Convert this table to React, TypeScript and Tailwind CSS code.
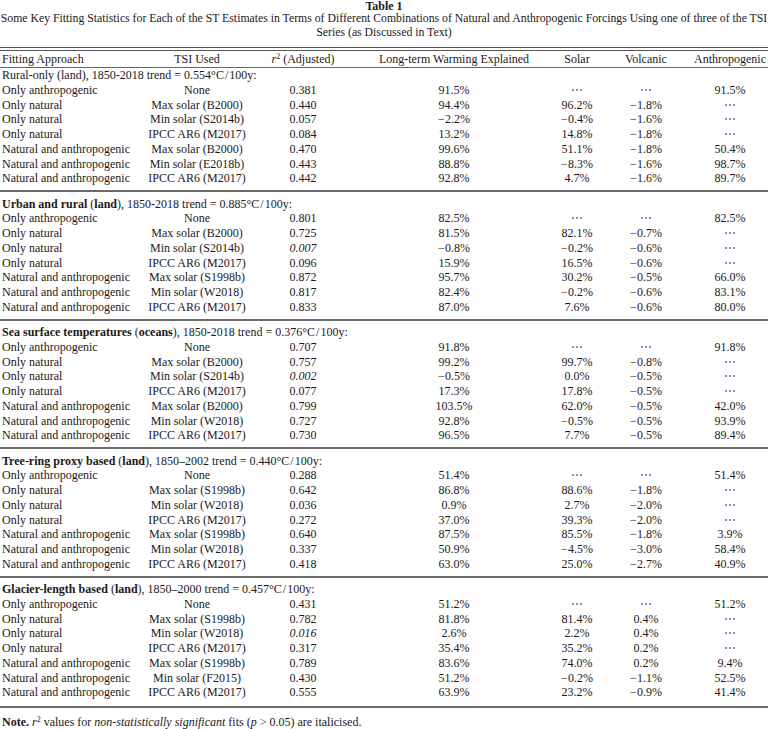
import React from 'react';

type Row = [string, string, string, string, string, string, string, boolean?];

interface Section {
  title: React.ReactNode;
  rows: Row[];
}

const M = '\u2212';
const E = '\u22EF';
const NA = 'Natural and anthropogenic';
const ON = 'Only natural';
const OA = 'Only anthropogenic';

const cols = 'grid grid-cols-[142px_110px_102px_200px_46px_92px_76px]';
const line = 'h-[14.75px] leading-[14.75px]';

const trend = (v: string) => (
  <>
    trend = {v}°C{'\u200A'}/{'\u200A'}100y:
  </>
);

const sections: Section[] = [
  {
    title: <>Rural-only (land), 1850-2018 {trend('0.554')}</>,
    rows: [
      [OA, 'None', '0.381', '91.5%', E, E, '91.5%'],
      [ON, 'Max solar (B2000)', '0.440', '94.4%', '96.2%', `${M}1.8%`, E],
      [ON, 'Min solar (S2014b)', '0.057', `${M}2.2%`, `${M}0.4%`, `${M}1.6%`, E],
      [ON, 'IPCC AR6 (M2017)', '0.084', '13.2%', '14.8%', `${M}1.8%`, E],
      [NA, 'Max solar (B2000)', '0.470', '99.6%', '51.1%', `${M}1.8%`, '50.4%'],
      [NA, 'Min solar (E2018b)', '0.443', '88.8%', `${M}8.3%`, `${M}1.6%`, '98.7%'],
      [NA, 'IPCC AR6 (M2017)', '0.442', '92.8%', '4.7%', `${M}1.6%`, '89.7%'],
    ],
  },
  {
    title: (
      <>
        <b>Urban and rural</b> (<b>land</b>), 1850-2018 {trend('0.885')}
      </>
    ),
    rows: [
      [OA, 'None', '0.801', '82.5%', E, E, '82.5%'],
      [ON, 'Max solar (B2000)', '0.725', '81.5%', '82.1%', `${M}0.7%`, E],
      [ON, 'Min solar (S2014b)', '0.007', `${M}0.8%`, `${M}0.2%`, `${M}0.6%`, E, true],
      [ON, 'IPCC AR6 (M2017)', '0.096', '15.9%', '16.5%', `${M}0.6%`, E],
      [NA, 'Max solar (S1998b)', '0.872', '95.7%', '30.2%', `${M}0.5%`, '66.0%'],
      [NA, 'Min solar (W2018)', '0.817', '82.4%', `${M}0.2%`, `${M}0.6%`, '83.1%'],
      [NA, 'IPCC AR6 (M2017)', '0.833', '87.0%', '7.6%', `${M}0.6%`, '80.0%'],
    ],
  },
  {
    title: (
      <>
        <b>Sea surface temperatures</b> (<b>oceans</b>), 1850-2018 {trend('0.376')}
      </>
    ),
    rows: [
      [OA, 'None', '0.707', '91.8%', E, E, '91.8%'],
      [ON, 'Max solar (B2000)', '0.757', '99.2%', '99.7%', `${M}0.8%`, E],
      [ON, 'Min solar (S2014b)', '0.002', `${M}0.5%`, '0.0%', `${M}0.5%`, E, true],
      [ON, 'IPCC AR6 (M2017)', '0.077', '17.3%', '17.8%', `${M}0.5%`, E],
      [NA, 'Max solar (B2000)', '0.799', '103.5%', '62.0%', `${M}0.5%`, '42.0%'],
      [NA, 'Min solar (W2018)', '0.727', '92.8%', `${M}0.5%`, `${M}0.5%`, '93.9%'],
      [NA, 'IPCC AR6 (M2017)', '0.730', '96.5%', '7.7%', `${M}0.5%`, '89.4%'],
    ],
  },
  {
    title: (
      <>
        <b>Tree-ring proxy based</b> (<b>land</b>), 1850–2002 {trend('0.440')}
      </>
    ),
    rows: [
      [OA, 'None', '0.288', '51.4%', E, E, '51.4%'],
      [ON, 'Max solar (S1998b)', '0.642', '86.8%', '88.6%', `${M}1.8%`, E],
      [ON, 'Min solar (W2018)', '0.036', '0.9%', '2.7%', `${M}2.0%`, E],
      [ON, 'IPCC AR6 (M2017)', '0.272', '37.0%', '39.3%', `${M}2.0%`, E],
      [NA, 'Max solar (S1998b)', '0.640', '87.5%', '85.5%', `${M}1.8%`, '3.9%'],
      [NA, 'Min solar (W2018)', '0.337', '50.9%', `${M}4.5%`, `${M}3.0%`, '58.4%'],
      [NA, 'IPCC AR6 (M2017)', '0.418', '63.0%', '25.0%', `${M}2.7%`, '40.9%'],
    ],
  },
  {
    title: (
      <>
        <b>Glacier-length based</b> (<b>land</b>), 1850–2000 {trend('0.457')}
      </>
    ),
    rows: [
      [OA, 'None', '0.431', '51.2%', E, E, '51.2%'],
      [ON, 'Max solar (S1998b)', '0.782', '81.8%', '81.4%', '0.4%', E],
      [ON, 'Min solar (W2018)', '0.016', '2.6%', '2.2%', '0.4%', E, true],
      [ON, 'IPCC AR6 (M2017)', '0.317', '35.4%', '35.2%', '0.2%', E],
      [NA, 'Max solar (S1998b)', '0.789', '83.6%', '74.0%', '0.2%', '9.4%'],
      [NA, 'Min solar (F2015)', '0.430', '51.2%', `${M}0.2%`, `${M}1.1%`, '52.5%'],
      [NA, 'IPCC AR6 (M2017)', '0.555', '63.9%', '23.2%', `${M}0.9%`, '41.4%'],
    ],
  },
];

function Cell({ value, className }: { value: string; className: string }) {
  if (value === E) {
    return <div className={`${className} text-[#555]`}>{value}</div>;
  }
  return <div className={className}>{value}</div>;
}

function DataRow({ row }: { row: Row }) {
  const [approach, tsi, r2, explained, solar, volcanic, anthro, italic] = row;
  return (
    <div className={`${cols} ${line}`}>
      <div className="pl-[2px] whitespace-nowrap">{approach}</div>
      <div className="text-center whitespace-nowrap">{tsi}</div>
      <div className={italic ? 'text-center italic' : 'text-center'}>{r2}</div>
      <div className="text-center">{explained}</div>
      <Cell value={solar} className="text-center whitespace-nowrap" />
      <Cell value={volcanic} className="text-center whitespace-nowrap" />
      <Cell value={anthro} className="text-center whitespace-nowrap" />
    </div>
  );
}

export default function App() {
  return (
    <div className="w-[768px] h-[729px] overflow-hidden bg-white text-[#1a1a1a] text-[12px] font-['Liberation_Serif','Times_New_Roman',serif]">
      {/* Caption */}
      <div className="text-center font-bold leading-[10px] pt-px">Table 1</div>
      <div className="text-center leading-[14px] mt-[1px] text-[11.75px] whitespace-nowrap">
        Some Key Fitting Statistics for Each of the ST Estimates in Terms of Different Combinations of Natural and
        Anthropogenic Forcings Using one of three of the TSI
        <br />
        Series (as Discussed in Text)
      </div>

      <div className="mt-[7px] h-px bg-[#555]" />
      <div className="mt-[2px] h-px bg-[#555]" />

      {/* Column heads */}
      <div className={`${cols} h-[15px] leading-[15px] mt-px`}>
        <div className="pl-[2px]">Fitting Approach</div>
        <div className="text-center">TSI Used</div>
        <div className="text-center whitespace-nowrap">
          <i>r</i>
          <sup className="text-[8px]">2</sup> (Adjusted)
        </div>
        <div className="text-center">Long-term Warming Explained</div>
        <div className="text-center">Solar</div>
        <div className="text-center">Volcanic</div>
        <div className="text-center">Anthropogenic</div>
      </div>
      <div className="h-px bg-[#666]" />

      {sections.map((s, i) => (
        <div key={i}>
          <div className={`${line} pl-[2px] whitespace-nowrap`}>{s.title}</div>
          {s.rows.map((r, j) => (
            <DataRow key={j} row={r} />
          ))}
          {i < sections.length - 1 ? (
            <div className="pt-[4px] pb-[4.5px]">
              <div className="h-[2px] bg-[#6a6a6a]" />
            </div>
          ) : (
            <div className="pt-[6px] pb-[7px]">
              <div className="h-[2px] bg-[#6a6a6a]" />
            </div>
          )}
        </div>
      ))}

      <div className="pl-[2px] leading-[14px]">
        <b>Note.</b> <i>r</i>
        <sup className="text-[8px]">2</sup> values for <i>non-statistically significant</i> fits (<i>p</i> &gt; 0.05)
        are italicised.
      </div>
    </div>
  );
}
